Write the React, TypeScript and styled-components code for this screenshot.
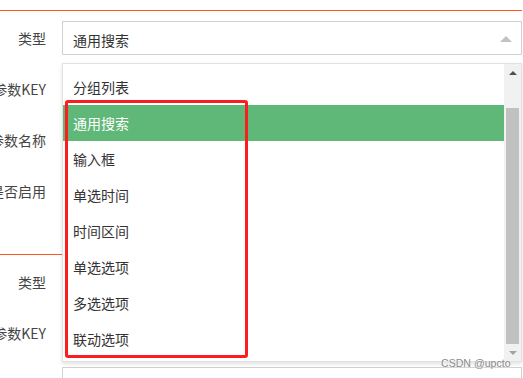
import React from "react";
import styled, { createGlobalStyle } from "styled-components";

const GlobalStyle = createGlobalStyle`
  html, body {
    margin: 0;
    padding: 0;
    background: #fff;
    overflow: hidden;
  }
  body {
    font-family: "Noto Sans CJK SC", "Noto Sans", sans-serif;
    font-size: 14px;
    color: #333;
  }
`;

const Page = styled.div`
  position: relative;
  width: 522px;
  padding-top: 10px;
`;

const Section = styled.section`
  border-top: 1px solid #ff5722;
  padding: 10px 0 29px;
`;

const Row = styled.div`
  display: flex;
  height: 34px;
  margin-bottom: 17px;
`;

const Label = styled.label`
  flex: 0 0 80px;
  margin-left: -18px;
  box-sizing: border-box;
  padding-right: 16px;
  text-align: right;
  line-height: 34px;
  white-space: nowrap;
  color: #444;
  font-size: 14px;
`;

const Field = styled.div`
  position: relative;
  flex: 1;
`;

const Input = styled.div`
  box-sizing: border-box;
  height: 34px;
  border: 1px solid #d2d2d2;
  background: #fff;
  display: flex;
  align-items: center;
  padding: 0 9px 0 10px;
  color: #333;
  font-size: 14px;
`;

const SelectValue = styled.span`
  flex: 1;
  padding-top: 3px;
`;

const Caret = styled.i<{ $up?: boolean }>`
  width: 0;
  height: 0;
  border-left: 6px solid transparent;
  border-right: 6px solid transparent;
  border-bottom: ${(p) => (p.$up ? "6px solid #c2c2c2" : "0")};
  border-top: ${(p) => (p.$up ? "0" : "6px solid #c2c2c2")};
  margin-top: 1px;
`;

const Dropdown = styled.div`
  position: absolute;
  top: 42px;
  left: 0;
  right: 0;
  height: 299px;
  box-sizing: border-box;
  border: 1px solid #e2e2e2;
  background: #fff;
  box-shadow: 0 2px 4px rgba(0, 0, 0, 0.12);
  display: flex;
  z-index: 10;
`;

const OptionList = styled.ul`
  flex: 1;
  list-style: none;
  margin: 0;
  padding: 5px 0 0;
  overflow: hidden;
`;

const Option = styled.li<{ $selected?: boolean }>`
  height: 36px;
  line-height: 36px;
  padding: 0 10px;
  font-size: 14px;
  color: ${(p) => (p.$selected ? "#fff" : "#333")};
  background: ${(p) => (p.$selected ? "#5fb878" : "transparent")};
  white-space: nowrap;
`;

const ScrollBar = styled.div`
  flex: 0 0 17px;
  display: flex;
  flex-direction: column;
  background: #f1f1f1;
`;

const ScrollButton = styled.div`
  height: 17px;
  display: flex;
  align-items: center;
  justify-content: center;
`;

const Arrow = styled.i<{ $down?: boolean; $color: string }>`
  width: 0;
  height: 0;
  border-left: 4px solid transparent;
  border-right: 4px solid transparent;
  border-bottom: ${(p) => (p.$down ? "0" : `4px solid ${p.$color}`)};
  border-top: ${(p) => (p.$down ? `4px solid ${p.$color}` : "0")};
`;

const Track = styled.div`
  flex: 1;
  padding-top: 27px;
`;

const Thumb = styled.div`
  height: 236px;
  margin: 0 2px;
  background: #c1c1c1;
`;

const Annotation = styled.div`
  position: absolute;
  left: 2px;
  top: 36px;
  width: 183px;
  height: 258px;
  box-sizing: border-box;
  border: 3px solid #fa1e1e;
  border-radius: 3px;
  pointer-events: none;
`;

const Watermark = styled.div`
  position: absolute;
  left: 441px;
  top: 357px;
  font-family: "Liberation Sans", Arial, sans-serif;
  font-size: 10.6px;
  color: #8c8c8c;
  text-shadow: 0 0 2px #fff;
  z-index: 20;
  white-space: nowrap;
`;

const options = [
  "分组列表",
  "通用搜索",
  "输入框",
  "单选时间",
  "时间区间",
  "单选选项",
  "多选选项",
  "联动选项",
];

export default function App() {
  return (
    <>
      <GlobalStyle />
      <Page>
        <Section>
          <Row>
            <Label>类型</Label>
            <Field>
              <Input>
                <SelectValue>通用搜索</SelectValue>
                <Caret $up />
              </Input>
              <Dropdown>
                <OptionList>
                  {options.map((o) => (
                    <Option key={o} $selected={o === "通用搜索"}>
                      {o}
                    </Option>
                  ))}
                </OptionList>
                <ScrollBar>
                  <ScrollButton>
                    <Arrow $color="#505050" />
                  </ScrollButton>
                  <Track>
                    <Thumb />
                  </Track>
                  <ScrollButton>
                    <Arrow $down $color="#a3a3a3" />
                  </ScrollButton>
                </ScrollBar>
                <Annotation />
              </Dropdown>
            </Field>
          </Row>
          <Row>
            <Label>参数KEY</Label>
            <Field>
              <Input />
            </Field>
          </Row>
          <Row>
            <Label>参数名称</Label>
            <Field>
              <Input />
            </Field>
          </Row>
          <Row>
            <Label>是否启用</Label>
            <Field>
              <Input />
            </Field>
          </Row>
        </Section>
        <Section>
          <Row>
            <Label>类型</Label>
            <Field>
              <Input />
            </Field>
          </Row>
          <Row>
            <Label>参数KEY</Label>
            <Field>
              <Input />
            </Field>
          </Row>
          <Row>
            <Label />
            <Field>
              <Input />
            </Field>
          </Row>
        </Section>
        <Watermark>CSDN @upcto</Watermark>
      </Page>
    </>
  );
}
